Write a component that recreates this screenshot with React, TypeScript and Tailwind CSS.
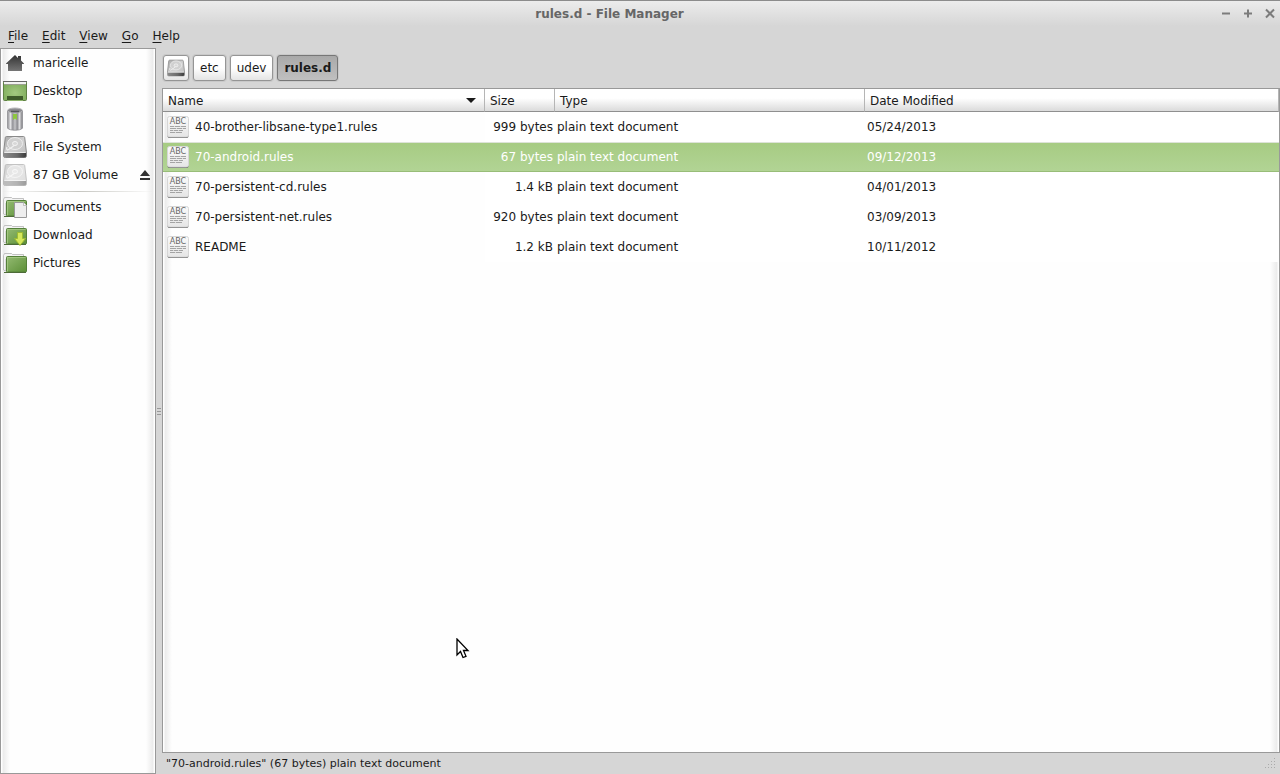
import { FunctionComponent, ReactNode, useState } from "react";

interface Place {
    label: string;
    icon: ReactNode;
    ejectable?: boolean;
}

interface FileEntry {
    name: string;
    size: string;
    modified: string;
}

const HomeIcon = () => (
    <svg width="24" height="24" viewBox="0 0 24 24" aria-hidden="true">
        <defs>
            <linearGradient id="home" x1="0" y1="0" x2="0" y2="1">
                <stop offset="0" stopColor="#333" />
                <stop offset="1" stopColor="#757575" />
            </linearGradient>
        </defs>
        <path d="M12 4 3 12.500V13h2v7h14v-7h2v-.5L18 9.500V5h-3v2z" fill="url(#home)" />
    </svg>
);

const DesktopIcon = () => (
    <svg width="24" height="24" viewBox="0 0 24 24" aria-hidden="true">
        <defs>
            <radialGradient id="desk" cx=".5" cy=".6" r=".7">
                <stop offset="0" stopColor="#a3c980" />
                <stop offset="1" stopColor="#79a856" />
            </radialGradient>
        </defs>
        <rect x=".5" y="2.500" width="23" height="19" rx="1" fill="url(#desk)" stroke="#5f8144" />
        <path d="M1 3h22v2H1z" fill="#f2f2f2" />
        <path d="M0 2.500h24" stroke="#666" />
        <path d="M1 5.500h22" stroke="#9aa08f" />
        <path d="M4 17h16v4H4z" fill="#3f5c2b" />
        <path d="M4 21.500h16" stroke="#8db36c" />
    </svg>
);

const TrashIcon = () => (
    <svg width="24" height="24" viewBox="0 0 24 24" aria-hidden="true">
        <defs>
            <linearGradient id="can" x1="0" y1="0" x2="1" y2="0">
                <stop offset="0" stopColor="#8e8e92" />
                <stop offset=".2" stopColor="#e2e2e4" />
                <stop offset=".35" stopColor="#929297" />
                <stop offset=".5" stopColor="#c6c6c9" />
                <stop offset=".65" stopColor="#8b8b90" />
                <stop offset=".8" stopColor="#dcdcde" />
                <stop offset="1" stopColor="#77777b" />
            </linearGradient>
        </defs>
        <path d="M4.500 4v17c1 3 14 3 15 0V4z" fill="url(#can)" stroke="#8a8a8e" strokeWidth=".7" />
        <ellipse cx="12" cy="3.500" rx="7.500" ry="2.500" fill="#8b8b8f" stroke="#b9b9bc" />
        <path d="M8 4.500h8" stroke="#55555a" strokeWidth="1.500" />
        <path d="M10 7h4v6l-2-1.500-2 1.500z" fill="#8dc63f" />
    </svg>
);

const DriveIcon = ({ size, faded }: { size: number; faded?: boolean }) => (
    <svg width={size} height={size} viewBox="0 0 24 24" opacity={faded ? 0.5 : 1} aria-hidden="true">
        <defs>
            <linearGradient id="drive" x1="0" y1="0" x2="1" y2="1">
                <stop offset="0" stopColor="#a8a8a8" />
                <stop offset=".5" stopColor="#d2d2d2" />
                <stop offset="1" stopColor="#bcbcbc" />
            </linearGradient>
            <linearGradient id="driveEdge" x1="0" y1="0" x2="1" y2="0">
                <stop offset="0" stopColor="#8a8a8a" />
                <stop offset=".6" stopColor="#6a6a6a" />
                <stop offset="1" stopColor="#3c3c3c" />
            </linearGradient>
        </defs>
        <path d="M3.500 1.500h17q1 0 1.200 1L23.500 18v3q0 1.500-2 1.500h-19Q.5 22.500.5 21v-3L2.300 2.500q.2-1 1.200-1z" fill="url(#drive)" stroke="#8a8a8a" />
        <path d="M1 18h22v3q0 1.500-1.500 1.500h-19Q1 22.500 1 21z" fill="url(#driveEdge)" />
        <path d="M1.500 17.500h21" stroke="#ececec" />
        <ellipse cx="12" cy="8.500" rx="7.500" ry="6" fill="#d0d0d0" stroke="#ededed" />
        <ellipse cx="12" cy="8.500" rx="2.500" ry="2" fill="#d8d8d8" stroke="#f4f4f4" />
        <path d="M11 10.500q-4 3.500-6.500 4.500-1.500-.5-.5-3" fill="none" stroke="#f0f0f0" strokeWidth="1.200" />
    </svg>
);

const FolderIcon = ({ children }: { children?: ReactNode }) => (
    <svg width="24" height="24" viewBox="0 0 24 24" aria-hidden="true">
        <defs>
            <linearGradient id="folder" x1="0" y1="0" x2="1" y2="1">
                <stop offset="0" stopColor="#94bb72" />
                <stop offset="1" stopColor="#5c8f37" />
            </linearGradient>
        </defs>
        <path d="M.5 19V4.500l1-2h7l1 1h11V8H3v12z" fill="#f4f4f4" stroke="#b4b4b4" strokeWidth=".8" />
        <rect x="3.500" y="5.500" width="20" height="15.500" rx="1" fill="url(#folder)" stroke="#55803a" />
        <path d="M4.500 20.500v-14h18" fill="none" stroke="#adcf8d" strokeWidth=".7" />
        <path d="M1 21.500h22" stroke="#4d6b38" />
        {children}
    </svg>
);

const TextFileIcon = () => (
    <svg width="22" height="24" viewBox="0 0 22 24" className="font-['DejaVu_Sans',sans-serif]" aria-hidden="true">
        <defs>
            <linearGradient id="paper" x1="0" y1="0" x2="0" y2="1">
                <stop offset="0" stopColor="#fafafa" />
                <stop offset="1" stopColor="#e6e6e6" />
            </linearGradient>
        </defs>
        <rect x=".5" y="3" width="21" height="20" rx="2" fill="#555" />
        <rect x=".5" y="1.500" width="21" height="20.500" rx="2" fill="url(#paper)" stroke="#d6d6d6" />
        <text x="11" y="9" textAnchor="middle" fontSize="8" fill="#666">ABC</text>
        <path d="M3 11.500h16M3 13.500h16M3 15.500h13M3 17.500h12" stroke="#a4a4a4" />
        <path d="M7 11.500h1M13 11.500h1M9 13.500h1M15 13.500h1M6 15.500h1M11 15.500h1M8 17.500h1" stroke="#d8d8d8" />
    </svg>
);

const places: Place[] = [
    { label: "maricelle", icon: <HomeIcon /> },
    { label: "Desktop", icon: <DesktopIcon /> },
    { label: "Trash", icon: <TrashIcon /> },
    { label: "File System", icon: <DriveIcon size={24} /> },
    { label: "87 GB Volume", icon: <DriveIcon size={24} faded />, ejectable: true },
];

const bookmarks: Place[] = [
    {
        label: "Documents",
        icon: (
            <FolderIcon>
                <path d="M11.500 7.500h9l3 3v12h-12z" fill="#eee" stroke="#999" />
                <path d="M20.500 7.500v3h3" fill="#fff" stroke="#aaa" strokeWidth=".7" />
            </FolderIcon>
        ),
    },
    {
        label: "Download",
        icon: (
            <FolderIcon>
                <path d="M14.500 9.500h5v6h3L17 22.500l-5.500-7h3z" fill="#d5e85c" stroke="#9dbb32" />
            </FolderIcon>
        ),
    },
    { label: "Pictures", icon: <FolderIcon /> },
];

const files: FileEntry[] = [
    { name: "40-brother-libsane-type1.rules", size: "999 bytes", modified: "05/24/2013" },
    { name: "70-android.rules", size: "67 bytes", modified: "09/12/2013" },
    { name: "70-persistent-cd.rules", size: "1.4 kB", modified: "04/01/2013" },
    { name: "70-persistent-net.rules", size: "920 bytes", modified: "03/09/2013" },
    { name: "README", size: "1.2 kB", modified: "10/11/2012" },
];

const menus = ["File", "Edit", "View", "Go", "Help"];

const PlaceList: FunctionComponent<{ items: Place[] }> = ({ items }) => (
    <ul>
        {items.map(({ label, icon, ejectable }) => (
            <li key={label} className="flex h-7 items-center pr-1 pl-0.5">
                <a href="#" className="flex flex-1 items-center gap-1.5">
                    {icon}
                    <span>{label}</span>
                </a>
                {ejectable && (
                    <button aria-label={`Eject ${label}`}>
                        <svg width="12" height="12" viewBox="0 0 12 12">
                            <path d="M6 1 11 7H1zM1 9h10v2H1z" fill="#333" />
                        </svg>
                    </button>
                )}
            </li>
        ))}
    </ul>
);

const crumb = "flex h-[26px] items-center justify-center rounded-[3px] border px-1.5 shadow-[0_0_0_1px_rgba(0,0,0,0.06)]";
const crumbUp = "border-[#959595] bg-linear-to-b from-white from-50% to-[#e4e4e4]";
const headCell = "border-r border-b border-r-[#b5b5b5] border-b-[#8f8f8f] p-0 pt-px font-normal";
const well = "border border-[#999] bg-[linear-gradient(to_right,#fff_1px,#ebebeb_2px,#fefefe_9px,#fefefe_calc(100%-9px),#ebebeb_calc(100%-2px),#fff_calc(100%-1px))]";

const App: FunctionComponent = () => {
    const [selected, setSelected] = useState("70-android.rules");
    const current = files.find(f => f.name === selected);

    return (
        <div className="flex h-screen flex-col overflow-hidden bg-[#d6d6d6] font-['DejaVu_Sans',sans-serif] text-[12px] leading-4 text-[#1a1a1a]">
            <header className="flex h-[26px] shrink-0 items-center border-t border-[#8c8c8c] bg-linear-to-b from-[#ececec] to-[#d6d6d6]">
                <h1 className="flex-1 text-center font-bold text-[#666]">rules.d - File Manager</h1>
                <div className="flex gap-2 pr-[3px] text-[#7c7c7c]">
                    <button aria-label="Minimize">
                        <svg width="14" height="14" viewBox="0 0 14 14"><path d="M3 6.500h8" stroke="currentColor" strokeWidth="2" /></svg>
                    </button>
                    <button aria-label="Maximize">
                        <svg width="14" height="14" viewBox="0 0 14 14"><path d="M3 6.500h8M7 2.500v8" stroke="currentColor" strokeWidth="2" /></svg>
                    </button>
                    <button aria-label="Close">
                        <svg width="14" height="14" viewBox="0 0 14 14"><path d="m3 2.500 8 8m0-8-8 8" stroke="currentColor" strokeWidth="2" /></svg>
                    </button>
                </div>
            </header>

            <nav className="flex h-[22px] shrink-0 items-center gap-3.5 px-2">
                {menus.map(menu => (
                    <button key={menu} className="pb-0.5">
                        <span className="underline underline-offset-2">{menu[0]}</span>{menu.slice(1)}
                    </button>
                ))}
            </nav>

            <div className="flex min-h-0 flex-1">
                <aside className={`w-[156px] shrink-0 ${well}`}>
                    <PlaceList items={places} />
                    <div className="flex h-1 items-center">
                        <div className="h-px w-full bg-linear-to-r from-transparent via-[#c5c5c0] to-transparent" />
                    </div>
                    <PlaceList items={bookmarks} />
                </aside>

                <div className="flex w-1.5 shrink-0 cursor-col-resize flex-col items-center justify-center gap-0.5">
                    <span className="h-px w-1 bg-[#999]" />
                    <span className="h-px w-1 bg-[#999]" />
                    <span className="h-px w-1 bg-[#999]" />
                </div>

                <main className="flex min-w-0 flex-1 flex-col">
                    <div className="flex h-10 shrink-0 items-center gap-1 pl-px">
                        <button aria-label="File System" className={`${crumb} ${crumbUp} w-[26px]`}>
                            <span className="shrink-0"><DriveIcon size={18} /></span>
                        </button>
                        <button className={`${crumb} ${crumbUp}`}>etc</button>
                        <button className={`${crumb} ${crumbUp}`}>udev</button>
                        <button className={`${crumb} border-[#777] bg-linear-to-b from-[#a9a9a9] to-[#c0c0c0] font-bold`}>rules.d</button>
                    </div>

                    <section className={`relative min-h-0 flex-1 ${well}`}>
                        <table className="w-full table-fixed border-separate border-spacing-0 text-left">
                            <colgroup>
                                <col className="w-[322px]" />
                                <col className="w-[70px]" />
                                <col className="w-[310px]" />
                                <col />
                            </colgroup>
                            <thead>
                                <tr className="h-[23px] bg-linear-to-b from-white from-40% to-[#d8d8d8]">
                                    <th className={headCell}>
                                        <button className="flex w-full items-center justify-between pr-2 pl-[5px]">
                                            Name
                                            <svg width="10" height="6" viewBox="0 0 10 6"><path d="M0 0h10L5 5z" fill="#1a1a1a" /></svg>
                                        </button>
                                    </th>
                                    <th className={headCell}><button className="pl-[5px]">Size</button></th>
                                    <th className={headCell}><button className="pl-[5px]">Type</button></th>
                                    <th className={headCell}><button className="pl-[5px]">Date Modified</button></th>
                                </tr>
                            </thead>
                            <tbody>
                                {files.map(({ name, size, modified }) => {
                                    const active = name === selected;
                                    const cell = active
                                        ? "border-t border-b border-t-[#dde3d8] border-b-[#98bd78] p-0 pb-px"
                                        : "p-0 pb-px";
                                    const plain = active ? "" : "bg-white";

                                    return (
                                        <tr
                                            key={name}
                                            onClick={() => setSelected(name)}
                                            className={`h-[30px] ${active ? "bg-linear-to-b from-[#a6cb82] to-[#b2d495] text-white" : ""}`}
                                        >
                                            <td className={cell}>
                                                <div className="flex items-center gap-1.5 pl-1">
                                                    <TextFileIcon />
                                                    {name}
                                                </div>
                                            </td>
                                            <td className={`${cell} ${plain} text-right whitespace-nowrap`}><span className="pr-0.5">{size}</span></td>
                                            <td className={`${cell} ${plain}`}><span className="pl-0.5">plain text document</span></td>
                                            <td className={`${cell} ${plain}`}><span className="pl-0.5">{modified}</span></td>
                                        </tr>
                                    );
                                })}
                            </tbody>
                        </table>

                        {/* mouse pointer */}
                        <svg width="14" height="21" viewBox="0 0 14 21" className="pointer-events-none absolute top-[549px] left-[293px]" aria-hidden="true">
                            <path d="M1 1v16l3.500-3.500L7 19.500l3-1.200-2.500-5.800H12z" fill="#fff" stroke="#000" strokeWidth="1.300" />
                        </svg>
                    </section>

                    <footer className="flex h-[21px] shrink-0 items-center justify-between pr-1 pl-1 text-[11px]">
                        <span>{current && `"${current.name}" (${current.size}) plain text document`}</span>
                        <svg width="12" height="12" viewBox="0 0 12 12" className="mb-1 self-end" aria-hidden="true">
                            <path d="M10 0h1v1h-1zM7 3h1v1H7zM10 3h1v1h-1zM4 6h1v1H4zM7 6h1v1H7zM10 6h1v1h-1zM1 9h1v1H1zM4 9h1v1H4zM7 9h1v1H7zM10 9h1v1h-1z" fill="#aaa" />
                        </svg>
                    </footer>
                </main>
            </div>
        </div>
    );
};

export default App;
